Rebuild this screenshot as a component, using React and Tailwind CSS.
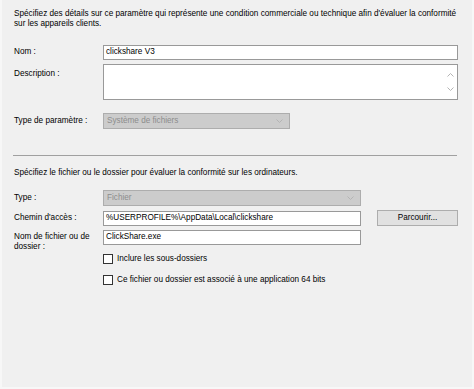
import React from 'react';

const Chevron = ({ up = false }) => (
  <svg width="7" height="4" viewBox="0 0 7 4" className="block">
    <path
      d={up ? 'M0.5 3.5 L3.5 0.5 L6.5 3.5' : 'M0.5 0.5 L3.5 3.5 L6.5 0.5'}
      fill="none"
      stroke="#b4b4b4"
      strokeWidth="1"
    />
  </svg>
);

const Combo = ({ value, width }) => (
  <div className={`${width} h-[16px] bg-[#cccccc] border border-[#adadad] flex items-center justify-between pl-[3px] pr-[6px] text-[#8c8c8c]`}>
    <span className="leading-none">{value}</span>
    <Chevron />
  </div>
);

const TextBox = ({ value, className = '' }) => (
  <div className={`h-[15px] bg-white border border-[#999] flex items-center pl-[2px] ${className}`}>
    <span className="leading-none">{value}</span>
  </div>
);

const Check = ({ label }) => (
  <div className="flex items-center gap-[4px] pl-[89px]">
    <div className="w-[10px] h-[10px] bg-white border border-[#333]" />
    <span className="leading-none">{label}</span>
  </div>
);

export default function App() {
  return (
    <div
      className="w-[474px] h-[389px] bg-[#f0f0f0] border-x-2 border-b-2 border-[#f7f7f7] text-[8.2px] text-black pl-[12px] pt-[9px] overflow-hidden"
      style={{ fontFamily: '"Liberation Sans", Arial, sans-serif' }}
    >
      <p className="leading-[10px] w-[445px]">
        Spécifiez des détails sur ce paramètre qui représente une condition commerciale ou technique afin d'évaluer la conformité sur les appareils clients.
      </p>

      <div className="flex items-center mt-[16px]">
        <span className="w-[89px]">Nom :</span>
        <TextBox value="clickshare V3" className="w-[355px]" />
      </div>

      <div className="flex mt-[4px]">
        <span className="w-[89px] pt-[4px]">Description :</span>
        <div className="w-[355px] h-[36px] bg-white border border-[#999] flex justify-end">
          <div className="w-[14px] flex flex-col justify-between items-center py-[8px]">
            <Chevron up />
            <Chevron />
          </div>
        </div>
      </div>

      <div className="flex items-center mt-[13px]">
        <span className="w-[89px]">Type de paramètre :</span>
        <Combo value="Système de fichiers" width="w-[187px]" />
      </div>

      <div className="w-[444px] h-px bg-[#a0a0a0] mt-[26px] -ml-[1px]" />

      <p className="leading-[10px] mt-[12px]">
        Spécifiez le fichier ou le dossier pour évaluer la conformité sur les ordinateurs.
      </p>

      <div className="flex items-center mt-[12px]">
        <span className="w-[89px]">Type :</span>
        <Combo value="Fichier" width="w-[258px]" />
      </div>

      <div className="flex items-center mt-[4px]">
        <span className="w-[89px]">Chemin d'accès :</span>
        <TextBox value="%USERPROFILE%\AppData\Local\clickshare" className="w-[258px]" />
        <div className="ml-[16px] w-[81px] h-[16px] bg-[#e1e1e1] border border-[#adadad] flex items-center justify-center">
          <span className="leading-none">Parcourir...</span>
        </div>
      </div>

      <div className="flex items-start mt-[4px]">
        <span className="w-[89px] leading-[10px] pt-[2px]">Nom de fichier ou de dossier :</span>
        <TextBox value="ClickShare.exe" className="w-[258px]" />
      </div>

      <div className="mt-[2px]">
        <Check label="Inclure les sous-dossiers" />
      </div>
      <div className="mt-[11px]">
        <Check label="Ce fichier ou dossier est associé à une application 64 bits" />
      </div>
    </div>
  );
}
